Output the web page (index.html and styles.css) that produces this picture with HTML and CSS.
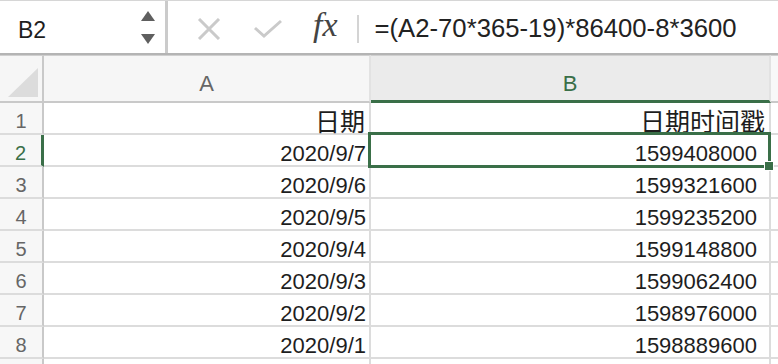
FILE: index.html
```html
<!DOCTYPE html>
<html lang="zh-CN">
<head>
    <meta charset="UTF-8">
    <title>日期时间戳</title>
    <link rel="stylesheet" href="styles.css">
</head>
<body>

    <!-- Formula Bar -->
    <div class="formula-bar">
        <div class="name-box">
            <span class="cell-name">B2</span>
            <svg class="spin" width="14" height="34" viewBox="0 0 14 34">
                <polygon points="7,0 14,10 0,10" fill="#5f5f5f"/>
                <polygon points="0,23 14,23 7,33" fill="#5f5f5f"/>
            </svg>
        </div>
        <svg class="icon-cancel" width="24" height="22" viewBox="0 0 24 22">
            <path d="M2 1 L22 21 M22 1 L2 21" stroke="#cacaca" stroke-width="3" fill="none"/>
        </svg>
        <svg class="icon-enter" width="30" height="19" viewBox="0 0 30 19">
            <polyline points="2,9 11,17 28,2" stroke="#cacaca" stroke-width="3" fill="none"/>
        </svg>
        <span class="fx">fx</span>
        <span class="divider"></span>
        <div class="formula">=(A2-70*365-19)*86400-8*3600</div>
    </div>

    <!-- Sheet -->
    <div class="sheet">
        <div class="corner">
            <svg width="42" height="45" viewBox="0 0 42 45">
                <polygon points="38,12 38,41 8,41" fill="#dcdcdc"/>
            </svg>
        </div>
        <div class="col-head">A</div>
        <div class="col-head selected">B</div>
        <div class="col-head last"></div>

        <div class="row-head">1</div>
        <div class="cell"><span class="cjk">日期</span></div>
        <div class="cell"><span class="cjk">日期时间戳</span></div>
        <div class="cell last"></div>

        <div class="row-head selected">2</div>
        <div class="cell">2020/9/7</div>
        <div class="cell num">1599408000</div>
        <div class="cell last"></div>

        <div class="row-head">3</div>
        <div class="cell">2020/9/6</div>
        <div class="cell num">1599321600</div>
        <div class="cell last"></div>

        <div class="row-head">4</div>
        <div class="cell">2020/9/5</div>
        <div class="cell num">1599235200</div>
        <div class="cell last"></div>

        <div class="row-head">5</div>
        <div class="cell">2020/9/4</div>
        <div class="cell num">1599148800</div>
        <div class="cell last"></div>

        <div class="row-head">6</div>
        <div class="cell">2020/9/3</div>
        <div class="cell num">1599062400</div>
        <div class="cell last"></div>

        <div class="row-head">7</div>
        <div class="cell">2020/9/2</div>
        <div class="cell num">1598976000</div>
        <div class="cell last"></div>

        <div class="row-head">8</div>
        <div class="cell">2020/9/1</div>
        <div class="cell num">1598889600</div>
        <div class="cell last"></div>

        <!-- partly visible row below -->
        <div class="row-head"></div>
        <div class="cell"></div>
        <div class="cell"></div>
        <div class="cell last"></div>

        <!-- Active cell selection -->
        <div class="selection"></div>
        <div class="fill-handle"></div>
    </div>

</body>
</html>
```

FILE: styles.css
```css
* {
    box-sizing: border-box;
}

body {
    margin: 0;
    width: 778px;
    height: 364px;
    overflow: hidden;
    background-color: #fff;
    font-family: "Liberation Sans", "Noto Sans CJK SC", sans-serif;
    color: #1e1e1e;
}

/* Formula Bar */
.formula-bar {
    display: flex;
    align-items: center;
    height: 55px;
    border-top: 1px solid #d6d6d6;
    border-bottom: 2px solid #b4b4b4;
    background-color: #fff;
}

.name-box {
    display: flex;
    align-items: center;
    justify-content: space-between;
    width: 168px;
    height: 100%;
    padding-left: 18px;
    padding-right: 10px;
    border-right: 3px solid #cbcbcb;
}

.cell-name {
    font-size: 23px;
    padding-top: 6px;
}

.spin {
    margin-top: 2px;
}

.icon-cancel {
    margin-left: 29px;
    margin-top: 4px;
}

.icon-enter {
    margin-left: 32px;
    margin-top: 2px;
}

.fx {
    margin-left: 30px;
    font-family: "Liberation Serif", serif;
    font-style: italic;
    font-size: 34px;
    color: #444;
    padding-bottom: 4px;
}

.divider {
    width: 2px;
    height: 28px;
    margin-left: 19px;
    margin-top: 4px;
    background-color: #d4d4d4;
}

.formula {
    margin-left: 16px;
    font-size: 25.7px;
    color: #222;
    padding-top: 2px;
}

/* Sheet grid */
.sheet {
    position: relative;
    display: grid;
    grid-template-columns: 44px 327px 400px 1fr;
    grid-template-rows: 48px repeat(9, 32px);
}

.corner,
.col-head {
    background-color: #f6f6f6;
    border-top: 1px solid #cfcfcf;
    border-bottom: 2px solid #c9c9c9;
}

.corner {
    border-right: 2px solid #c9c9c9;
}

.corner svg {
    display: block;
}

.col-head {
    display: flex;
    align-items: flex-end;
    justify-content: center;
    padding-bottom: 6px;
    border-right: 2px solid #e2e2e2;
    font-size: 22px;
    line-height: 22px;
    color: #666;
}

.col-head.selected {
    background-color: #ebebeb;
    color: #3a6f48;
    border-bottom: 3px solid #3a6f48;
    padding-bottom: 5px;
}

.col-head.last {
    border-right: none;
    background-color: #f8f8f8;
}

.row-head {
    display: flex;
    align-items: flex-end;
    justify-content: center;
    padding-bottom: 2px;
    background-color: #f7f7f7;
    border-right: 2px solid #c9c9c9;
    border-bottom: 2px solid #dcdcdc;
    font-size: 20px;
    line-height: 20px;
    color: #666;
}

.row-head.selected {
    color: #3a6f48;
    border-right: 3px solid #3a6f48;
}

.cell {
    display: flex;
    align-items: flex-end;
    justify-content: flex-end;
    padding-right: 3px;
    border-right: 2px solid #dcdcdc;
    border-bottom: 2px solid #dcdcdc;
    font-size: 22px;
    line-height: 22px;
    white-space: nowrap;
}

.cell.num {
    padding-right: 12px;
}

.cell.last {
    border-right: none;
}

.cjk {
    font-family: "Noto Sans CJK SC", sans-serif;
    font-size: 25px;
    line-height: 25px;
    margin-right: 1px;
}

/* Active cell */
.selection {
    position: absolute;
    left: 368px;
    top: 77px;
    width: 403px;
    height: 36px;
    border: 3px solid #3a6f48;
}

.fill-handle {
    position: absolute;
    left: 765px;
    top: 107px;
    width: 8px;
    height: 8px;
    background-color: #3a6f48;
    box-shadow: 0 0 0 1px #fff;
}
```
